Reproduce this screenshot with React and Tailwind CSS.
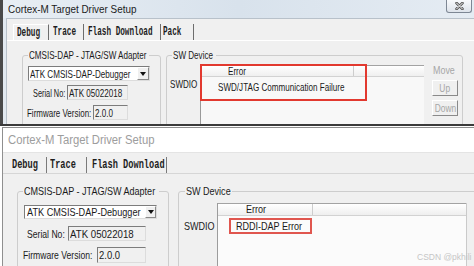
const sans = "font-['Liberation_Sans',Arial,sans-serif]";
const mono = "font-['Liberation_Mono','Courier_New',monospace]";

// text from the old dialog is narrower than Arial, so squeeze it horizontally
function Txt({ className = '', children }) {
  return <span className={`inline-block whitespace-nowrap ${className}`}>{children}</span>;
}

function Box({ className = '', children }) {
  return (
    <div
      className={`flex items-center shrink-0 border border-t-[#7c7c7c] border-l-[#7c7c7c] border-r-[#dcdcdc] border-b-[#dcdcdc] ${className}`}
    >
      {children}
    </div>
  );
}

function Arrow({ className = '' }) {
  return (
    <div
      className={`h-full shrink-0 flex items-center justify-center bg-[#f0f0f0] border border-t-white border-l-white border-r-[#8a8a8a] border-b-[#8a8a8a] ${className}`}
    >
      <svg width="6" height="4" viewBox="0 0 6 4">
        <path d="M0 0h6L3 4z" fill="#111" />
      </svg>
    </div>
  );
}

function CloseButton() {
  return (
    <div className="mr-[2px] w-[26px] h-[13px] shrink-0 flex items-center justify-center border border-t-0 border-[#7d8794] rounded-b-[3px] bg-gradient-to-b from-[#f8fafc] to-[#dde3ea]">
      <svg width="9" height="8" viewBox="0 0 9 8">
        <path d="M1.5 1l6 6M7.5 1l-6 6" stroke="#555" strokeWidth="2.6" strokeLinecap="round" />
        <path d="M1.5 1l6 6M7.5 1l-6 6" stroke="#fff" strokeWidth="1" strokeLinecap="round" />
      </svg>
    </div>
  );
}

const topTabs = [
  ['Debug', 'w-[36px] pl-[3px] border-l border-t border-l-white border-t-white'],
  ['Trace', 'w-[35px] pl-[4px]'],
  ['Flash Download', 'w-[77px] pl-[4px]'],
  ['Pack', 'w-[33px] pl-[2px]'],
];

const bottomTabs = [
  ['Debug', 'w-[39px] pl-[4px]'],
  ['Trace', 'w-[40px] pl-[3px]'],
  ['Flash Download', 'w-[80px] pl-[5px]'],
];

function TopShot() {
  return (
    <div className="h-[124px] shrink-0 flex flex-col border-l-[3px] border-[#4a4a4a] overflow-hidden">
      <div className="h-[18px] shrink-0 flex justify-between bg-gradient-to-r from-[#e8eef4] via-[#d8e2ec] to-[#e5ecf3]">
        <Txt className="ml-[5px] mt-[2px] text-[11.5px] leading-[14px] text-[#1b1b1b] origin-left scale-x-[0.86]">
          Cortex-M Target Driver Setup
        </Txt>
        <CloseButton />
      </div>

      <div className="flex-1 flex bg-[#e2e9f0] pl-[3px]">
        <div className="flex-1 flex flex-col bg-[#f0f0f0] border-l border-t border-[#b8c1ca]">
          {/* tabs */}
          <div className={`mt-[5px] ml-[6px] h-[16px] shrink-0 flex ${mono}`}>
            {topTabs.map(([label, cls]) => (
              <div
                key={label}
                className={`h-full flex items-center border-r border-[#6d6d6d] text-[12px] leading-[12px] font-bold text-[#1d1d1d] ${cls}`}
              >
                <Txt className="origin-left scale-x-[0.64]">{label}</Txt>
              </div>
            ))}
          </div>

          <div className="flex-1 flex gap-[5px] pt-[8px] pl-[15px] border-t border-white text-[10.5px] leading-[12px] text-[#1a1a1a]">
            {/* adapter group */}
            <fieldset className="w-[139px] h-[80px] shrink-0 border border-[#cdcdcd] rounded-[3px] px-[5px]">
              <legend className="w-[121px] h-[12px] px-[1px]">
                <Txt className="origin-left scale-x-[0.77]">CMSIS-DAP - JTAG/SW Adapter</Txt>
              </legend>
              <Box className="mt-[5px] w-[122px] h-[15px] bg-white">
                <div className="flex-1 min-w-0">
                  <Txt className="ml-[1px] origin-left scale-x-[0.77]">ATK CMSIS-DAP-Debugger</Txt>
                </div>
                <Arrow className="w-[12px]" />
              </Box>
              <div className="mt-[4px] h-[15px] flex items-center">
                <div className="w-[39px] shrink-0 pl-[5px]">
                  <Txt className="origin-left scale-x-[0.7]">Serial No:</Txt>
                </div>
                <Box className="w-[61px] h-full">
                  <div className="min-w-0">
                    <Txt className="ml-[1px] origin-left scale-x-[0.77]">ATK 05022018</Txt>
                  </div>
                </Box>
              </div>
              <div className="mt-[5px] -ml-[1px] h-[15px] flex items-center">
                <div className="w-[66px] shrink-0">
                  <Txt className="origin-left scale-x-[0.76]">Firmware Version:</Txt>
                </div>
                <Box className="w-[35px] h-full">
                  <Txt className="ml-[1px] origin-left scale-x-[0.77]">2.0.0</Txt>
                </Box>
              </div>
            </fieldset>

            {/* sw device group */}
            <fieldset className="w-[297px] h-[80px] shrink-0 border border-[#cdcdcd] rounded-[3px] pl-[3px]">
              <legend className="ml-[2px] w-[44px] h-[12px] px-[1px]">
                <Txt className="origin-left scale-x-[0.77]">SW Device</Txt>
              </legend>
              <div className="flex items-start">
                <div className="w-[30px] shrink-0 mt-[17px]">
                  <Txt className="origin-left scale-x-[0.77]">SWDIO</Txt>
                </div>
                <div className="relative mt-[4px] w-[224px] h-[70px] shrink-0 border-l border-[#9a9a9a] bg-[#f8f8f8]">
                  <div className="h-[12px] flex border-t border-b border-t-[#a3a3a3] border-b-[#d2d2d2] bg-gradient-to-b from-white to-[#efefef]">
                    <div className="w-[153px] shrink-0 border-r border-[#cdcdcd] pl-[27px] leading-[10px]">
                      <Txt className="origin-left scale-x-[0.77]">Error</Txt>
                    </div>
                  </div>
                  <div className="mt-[4px] h-[12px] pl-[17px]">
                    <Txt className="origin-left scale-x-[0.77]">SWD/JTAG Communication Failure</Txt>
                  </div>
                  <div className="absolute left-[-1px] top-[-1px] w-[167px] h-[37px] border-2 border-[#e2392f]" />
                </div>
                <div className="ml-[8px] w-[26px] shrink-0 flex flex-col text-[#a6a6a6]">
                  <div className="mt-[3px] h-[12px] pl-[1px]">
                    <Txt className="origin-left scale-x-[0.85]">Move</Txt>
                  </div>
                  <div className="mt-[4px] h-[16px] flex items-center justify-center border border-t-white border-l-white border-r-[#8a8a8a] border-b-[#8a8a8a]">
                    <Txt className="origin-center scale-x-[0.8]">Up</Txt>
                  </div>
                  <div className="mt-[4px] h-[16px] flex items-center justify-center border border-t-white border-l-white border-r-[#8a8a8a] border-b-[#8a8a8a]">
                    <Txt className="origin-center scale-x-[0.8]">Down</Txt>
                  </div>
                </div>
              </div>
            </fieldset>
          </div>
        </div>
      </div>
    </div>
  );
}

function BottomShot() {
  return (
    <div className="ml-[2px] h-[139px] shrink-0 flex flex-col border-l border-t border-[#8f8f8f] overflow-hidden">
      <div className="h-[24px] shrink-0 flex items-center bg-white">
        <Txt className="ml-[5px] text-[12px] leading-[14px] text-[#9d9d9d] origin-left scale-x-[0.94]">
          Cortex-M Target Driver Setup
        </Txt>
      </div>

      <div className="flex-1 flex flex-col bg-[#f0f0f0] border-t border-[#e4e4e4]">
        <div className={`mt-[4px] ml-[5px] h-[16px] shrink-0 flex ${mono}`}>
          {bottomTabs.map(([label, cls]) => (
            <div
              key={label}
              className={`h-full flex items-center border-r border-[#7a7a7a] text-[12px] leading-[12px] font-bold text-[#1d1d1d] ${cls}`}
            >
              <Txt className="origin-left scale-x-[0.72]">{label}</Txt>
            </div>
          ))}
        </div>

        <div className="flex-1 flex gap-[9px] pt-[11px] pl-[14px] border-t border-[#d6d6d6] text-[10.5px] leading-[12px] text-[#1a1a1a]">
          <fieldset className="w-[152px] h-[90px] shrink-0 border border-[#cdcdcd] rounded-[3px] px-[5px]">
            <legend className="w-[136px] h-[12px] px-[1px]">
              <Txt className="origin-left scale-x-[0.86]">CMSIS-DAP - JTAG/SW Adapter</Txt>
            </legend>
            <Box className="ml-[1px] mt-[8px] w-[133px] h-[14px] bg-white">
              <div className="flex-1 min-w-0">
                <Txt className="ml-[2px] origin-left scale-x-[0.87]">ATK CMSIS-DAP-Debugger</Txt>
              </div>
              <Arrow className="w-[11px]" />
            </Box>
            <div className="mt-[7px] h-[15px] flex items-center">
              <div className="w-[45px] shrink-0 pl-[4px]">
                <Txt className="origin-left scale-x-[0.82]">Serial No:</Txt>
              </div>
              <Box className="w-[78px] h-full">
                <Txt className="ml-[1px] origin-left scale-x-[0.92]">ATK 05022018</Txt>
              </Box>
            </div>
            <div className="mt-[6px] h-[16px] flex items-center">
              <div className="w-[74px] shrink-0">
                <Txt className="origin-left scale-x-[0.82]">Firmware Version:</Txt>
              </div>
              <Box className="w-[49px] h-full">
                <Txt className="ml-[1px] origin-left scale-x-[0.9]">2.0.0</Txt>
              </Box>
            </div>
          </fieldset>

          <fieldset className="w-[300px] h-[90px] shrink-0 border border-[#cdcdcd] rounded-[3px] px-[5px]">
            <legend className="ml-[1px] w-[47px] h-[12px] px-[1px]">
              <Txt className="origin-left scale-x-[0.86]">SW Device</Txt>
            </legend>
            <div className="flex items-start">
              <div className="w-[33px] shrink-0 mt-[23px]">
                <Txt className="origin-left scale-x-[0.86]">SWDIO</Txt>
              </div>
              <div className="relative mt-[6px] w-[250px] h-[80px] shrink-0 border-l border-r border-l-[#9c9c9c] border-r-[#cacaca] bg-[#fbfbfb]">
                <div className="h-[13px] flex border-t border-b border-t-[#a3a3a3] border-b-[#d2d2d2] bg-gradient-to-b from-white to-[#efefef]">
                  <div className="w-[95px] shrink-0 border-r border-[#cdcdcd] pl-[28px] leading-[11px]">
                    <Txt className="origin-left scale-x-[0.86]">Error</Txt>
                  </div>
                </div>
                <div className="mt-[4px] h-[12px] pl-[18px]">
                  <Txt className="origin-left scale-x-[0.86]">RDDI-DAP Error</Txt>
                </div>
                <div className="absolute left-[11px] top-[15px] w-[83px] h-[16px] border-2 border-[#e0564f]" />
              </div>
            </div>
          </fieldset>
        </div>
      </div>
    </div>
  );
}

export default function App() {
  return (
    <div className={`relative w-[474px] h-[266px] flex flex-col overflow-hidden bg-white ${sans}`}>
      <TopShot />
      <div className="h-[2px] shrink-0 bg-[#3b3b3b]" />
      <div className="h-[1px] shrink-0" />
      <BottomShot />
      <span className="absolute left-[417px] top-[252px] text-[8.5px] leading-[11px] text-[#c6c6c6] whitespace-nowrap">
        CSDN @pkhili
      </span>
    </div>
  );
}
